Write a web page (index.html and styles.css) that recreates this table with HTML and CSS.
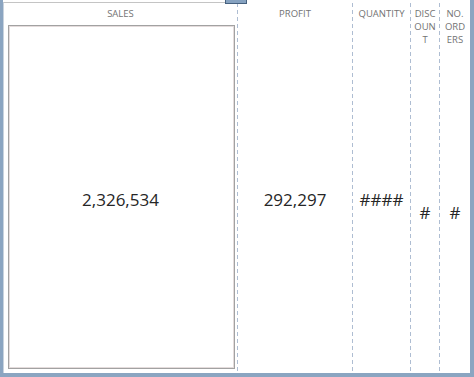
FILE: index.html
```html
<!DOCTYPE html>
<html>
<head>
<meta charset="utf-8">
<link rel="stylesheet" href="styles.css">
</head>
<body>
<div class="view">
  <div class="col col-sales">
    <div class="head">SALES</div>
    <div class="cell cell-selected"><span class="val">2,326,534</span></div>
  </div>
  <div class="col col-profit">
    <div class="head">PROFIT</div>
    <div class="cell"><span class="val">292,297</span></div>
  </div>
  <div class="col col-qty">
    <div class="head">QUANTITY</div>
    <div class="cell"><span class="val">####</span></div>
  </div>
  <div class="col col-disc">
    <div class="head">DISCOUNT</div>
    <div class="cell"><span class="val">#</span></div>
  </div>
  <div class="col col-orders last">
    <div class="head">NO. ORDERS</div>
    <div class="cell"><span class="val">#</span></div>
  </div>
  <div class="handle"></div>
</div>
</body>
</html>
```
FILE: styles.css
```css
html, body {
  margin: 0;
  padding: 0;
  background: #ffffff;
}
.view {
  position: relative;
  display: flex;
  width: 474px;
  height: 377px;
  box-sizing: border-box;
  border-left: 3px solid #8ba5c1;
  border-right: 4px solid #8ba5c1;
  border-bottom: 4px solid #8ba5c1;
  font-family: "Open Sans", "DejaVu Sans", sans-serif;
  background: #ffffff;
}
.col {
  display: flex;
  flex-direction: column;
  box-sizing: border-box;
  margin-top: 2px;
  border-top: 1px solid transparent;
  background-image: linear-gradient(to bottom, #aebdd2 4px, transparent 4px);
  background-size: 1px 7px;
  background-repeat: repeat-y;
  background-position: right top;
  padding-right: 1px;
}
.col.last {
  background: none;
  padding-right: 0;
}
.col-sales {
  width: 235px;
  border-left: 1px solid #c9d3de;
  border-top-color: #c4c4c4;
}
.col-profit { width: 115px; }
.col-qty { width: 58px; }
.col-disc { width: 29px; }
.col-orders { width: 30px; }
.head {
  padding: 4px 2px 5px;
  font-size: 9.5px;
  line-height: 13px;
  color: #737373;
  text-align: center;
  word-break: break-all;
}
.col-orders .head {
  padding-left: 3px;
  padding-right: 3px;
}
.cell {
  position: relative;
  flex: 1;
  display: flex;
  align-items: center;
  justify-content: center;
}
.cell-selected::before {
  content: "";
  position: absolute;
  top: 0;
  left: 4px;
  right: 2px;
  bottom: 4px;
  border: 1px solid #a2a2a2;
  box-shadow: inset 0 0 0 1px #e4dcdc;
}
.val {
  position: relative;
  font-size: 17px;
  color: #262626;
}
.handle {
  position: absolute;
  top: 0;
  left: 222px;
  width: 20px;
  height: 3px;
  background: #86a2c0;
  border: 1px solid #46617f;
  border-top: none;
}
```
